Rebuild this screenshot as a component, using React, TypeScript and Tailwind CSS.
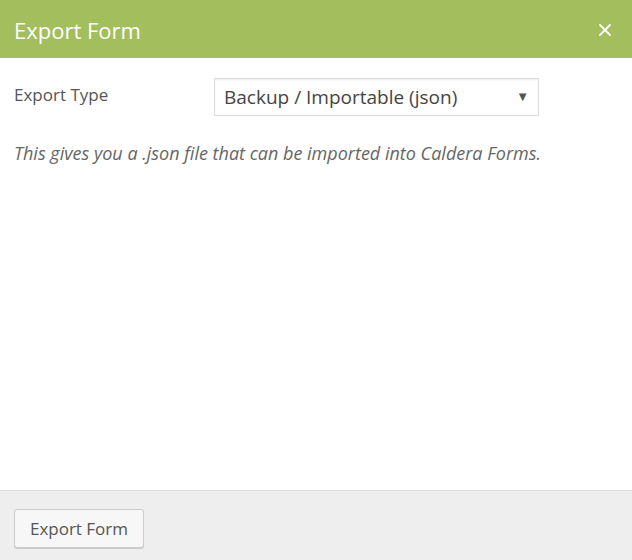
import { X } from "lucide-react";

export default function App() {
  return (
    <div
      className="flex h-[560px] w-[632px] flex-col bg-white"
      style={{ fontFamily: '"Open Sans", "Noto Sans", sans-serif' }}
    >
      {/* Header */}
      <div className="flex h-[58px] items-center justify-between bg-[#a3be5c] pl-[14px] pr-[17px] pt-[2px]">
        <h2 className="text-[22px] font-normal text-white">Export Form</h2>
        <button className="text-white">
          <X className="h-[20px] w-[20px]" strokeWidth={2.2} />
        </button>
      </div>

      {/* Body */}
      <div className="flex-1 px-[14px] pt-[20px]">
        <div className="flex items-center">
          <label className="w-[200px] text-[17px] leading-[24px] text-[#555] -mt-[4px]">Export Type</label>
          <div className="flex h-[38px] w-[325px] items-center justify-between border border-[#ddd] pl-[9px] pr-[9px] text-[19px] text-[#444] shadow-[inset_0_1px_2px_rgba(0,0,0,0.07)]">
            <span>Backup / Importable (json)</span>
            <span className="text-[13px] text-[#555]">▼</span>
          </div>
        </div>
        <p className="mt-[24px] text-[18px] italic text-[#666]">
          This gives you a .json file that can be imported into Caldera Forms.
        </p>
      </div>

      {/* Footer */}
      <div className="flex h-[70px] items-start border-t border-[#ddd] bg-[#eeeeee] px-[14px] pt-[18px]">
        <button className="h-[39px] w-[130px] rounded-[3px] border border-[#ccc] bg-[#f7f7f7] text-[17px] text-[#555] shadow-[0_1px_0_#ccc]">
          Export Form
        </button>
      </div>
    </div>
  );
}
